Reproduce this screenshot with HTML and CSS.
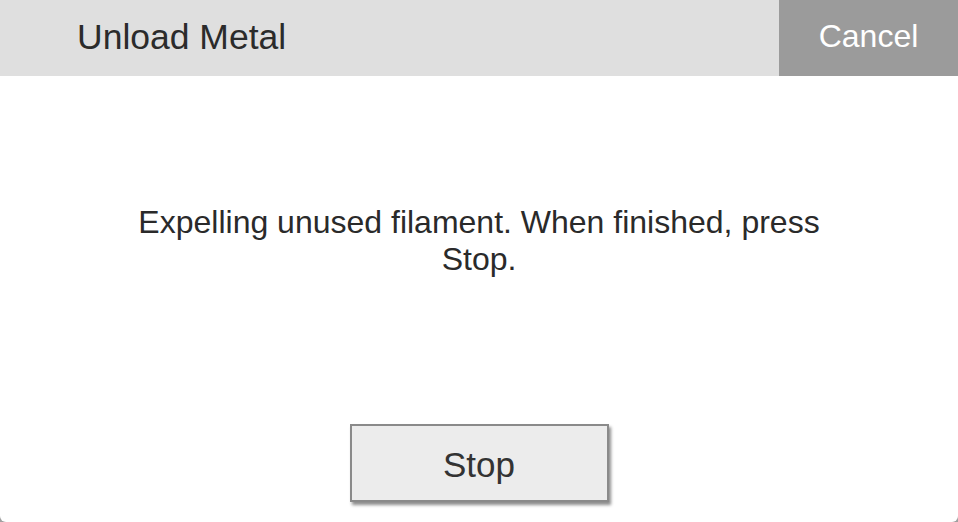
FILE: index.html
```html
<!DOCTYPE html>
<html>
<head>
<meta charset="utf-8">
<link rel="stylesheet" href="styles.css">
</head>
<body>
<div class="screen">
  <header class="header">
    <div class="title">Unload Metal</div>
    <button class="cancel">Cancel</button>
  </header>
  <main class="content">
    <p class="message">Expelling unused filament. When finished, press Stop.</p>
  </main>
  <footer class="footer">
    <button class="stop">Stop</button>
  </footer>
</div>
</body>
</html>
```

FILE: styles.css
```css
html, body {
  margin: 0;
  padding: 0;
  width: 958px;
  height: 522px;
  background: #a0a0a0;
  overflow: hidden;
}
.screen {
  width: 958px;
  height: 522px;
  background: #ffffff;
  border-radius: 0 0 6px 6px;
  display: flex;
  flex-direction: column;
  font-family: "Liberation Sans", Arial, sans-serif;
}
.header {
  height: 76px;
  background: #dfdfdf;
  display: flex;
  align-items: stretch;
}
.title {
  flex: 1;
  padding-left: 77px;
  font-size: 35.5px;
  color: #2b2b2b;
  display: flex;
  align-items: center;
  padding-bottom: 2px;
}
.cancel {
  width: 179px;
  border: none;
  margin: 0;
  background: #9b9b9b;
  color: #ffffff;
  font-family: inherit;
  font-size: 32px;
  padding: 0 0 3px 0;
}
.content {
  flex: 1;
  display: flex;
  justify-content: center;
}
.message {
  margin: 128px 0 0;
  width: 720px;
  text-align: center;
  font-size: 32px;
  line-height: 37px;
  color: #2a2a2a;
}
.footer {
  display: flex;
  justify-content: center;
  padding-bottom: 20px;
}
.stop {
  width: 259px;
  height: 78px;
  box-sizing: border-box;
  border: 2px solid #8a8a8a;
  background: #ececec;
  box-shadow: 2px 3px 3px rgba(0, 0, 0, 0.45);
  font-family: "Liberation Sans", Arial, sans-serif;
  font-size: 35px;
  color: #333333;
  padding: 4px 0 0 0;
}
```
